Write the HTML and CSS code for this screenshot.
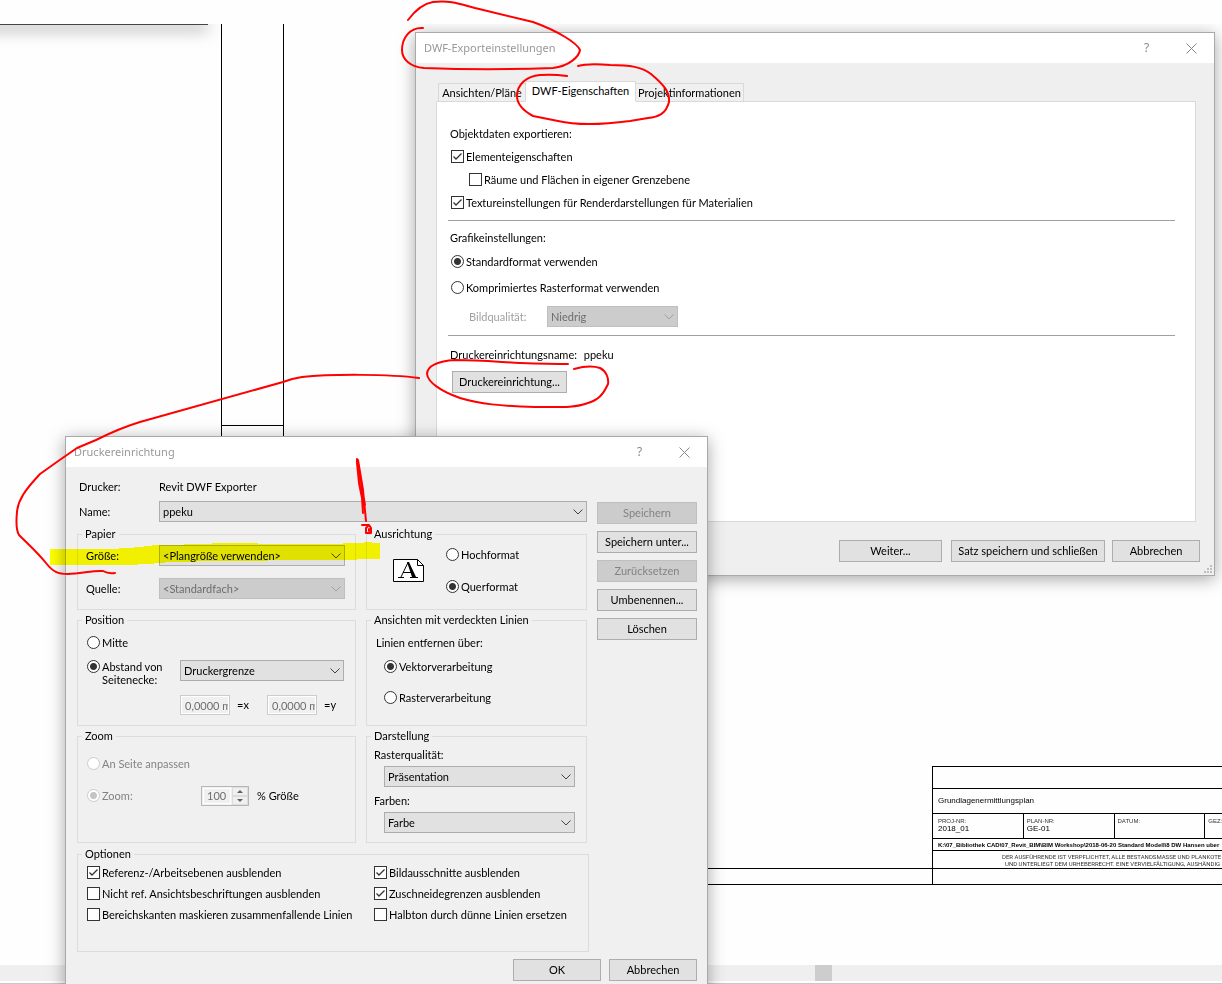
FILE: index.html
```
<!DOCTYPE html>
<html lang="de">
<head>
  <meta charset="UTF-8">
  <meta name="viewport" content="width=device-width, initial-scale=1.0">
  <title>DWF-Exporteinstellungen</title>
  <link rel="stylesheet" href="styles.css">
</head>
<body>
  <main class="workspace">

    <!-- sheet in the background -->
    <div class="ribbon-edge"></div>
    <div class="sheet-column"></div>
    <div class="sheet-border"></div>
    <div class="title-block">
      <table>
        <tr class="row-empty"><td colspan="4"></td></tr>
        <tr class="row-name"><td colspan="4">Grundlagenermittlungsplan</td></tr>
        <tr class="row-info">
          <td>PROJ-NR:<b>2018_01</b></td>
          <td>PLAN-NR:<b>GE-01</b></td>
          <td>DATUM:</td>
          <td>GEZ:</td>
        </tr>
        <tr class="row-path"><td colspan="4">K:\07_Bibliothek CAD\07_Revit_BIM\BIM Workshop\2018-06-20 Standard Modell\8 DW Hansen uber</td></tr>
        <tr class="row-legal"><td colspan="4"><p>DER AUSFÜHRENDE IST VERPFLICHTET, ALLE BESTANDSMASSE UND PLANKOTE</p><p>UND UNTERLIEGT DEM URHEBERRECHT. EINE VERVIELFÄLTIGUNG, AUSHÄNDIG</p></td></tr>
        <tr class="row-last"><td colspan="4"></td></tr>
      </table>
    </div>
    <div class="scrollbar"><div class="thumb"></div></div>

    <!-- DWF export settings -->
    <section class="window export-window">
      <header class="titlebar">
        <h1>DWF-Exporteinstellungen</h1>
        <button class="caption-btn" aria-label="Hilfe">?</button>
        <button class="caption-btn" aria-label="Schließen"><svg width="11" height="11" viewBox="0 0 11 11"><path d="M0.5 0.5l10 10M10.5 0.5l-10 10"/></svg></button>
      </header>
      <div class="export-body">
        <nav class="tabs">
          <button class="tab">Ansichten/Pläne</button>
          <button class="tab active">DWF-Eigenschaften</button>
          <button class="tab">Projektinformationen</button>
        </nav>
        <div class="tab-panel">
          <div class="group objects">
            <p>Objektdaten exportieren:</p>
            <label class="choice"><input type="checkbox" checked>Elementeigenschaften</label>
            <label class="choice indent"><input type="checkbox">Räume und Flächen in eigener Grenzebene</label>
            <label class="choice"><input type="checkbox" checked>Textureinstellungen für Renderdarstellungen für Materialien</label>
          </div>
          <div class="group graphics">
            <p>Grafikeinstellungen:</p>
            <label class="choice"><input type="radio" name="grafik" checked>Standardformat verwenden</label>
            <label class="choice"><input type="radio" name="grafik">Komprimiertes Rasterformat verwenden</label>
            <div class="quality">
              <label for="quality">Bildqualität:</label>
              <select id="quality" disabled><option>Niedrig</option></select>
            </div>
          </div>
          <div class="group setup">
            <p>Druckereinrichtungsname: <span>ppeku</span></p>
            <button class="btn">Druckereinrichtung...</button>
          </div>
        </div>
        <footer class="export-footer">
          <button class="btn next">Weiter...</button>
          <button class="btn save">Satz speichern und schließen</button>
          <button class="btn cancel">Abbrechen</button>
        </footer>
      </div>
      <svg class="grip" width="8" height="8" viewBox="0 0 8 8"><path d="M6 0h2v2h-2zM3 3h2v2h-2zM6 3h2v2h-2zM0 6h2v2h-2zM3 6h2v2h-2zM6 6h2v2h-2z"/></svg>
    </section>

    <!-- print setup -->
    <section class="window print-window">
      <header class="titlebar">
        <h1>Druckereinrichtung</h1>
        <button class="caption-btn" aria-label="Hilfe">?</button>
        <button class="caption-btn" aria-label="Schließen"><svg width="11" height="11" viewBox="0 0 11 11"><path d="M0.5 0.5l10 10M10.5 0.5l-10 10"/></svg></button>
      </header>
      <div class="print-body">
        <div class="print-main">
          <div class="printer">
            <span>Drucker:</span><span>Revit DWF Exporter</span>
            <label for="name">Name:</label>
            <select id="name"><option>ppeku</option></select>
          </div>

          <div class="fieldsets">
            <fieldset class="paper">
              <legend>Papier</legend>
              <label for="size">Größe:</label>
              <select id="size"><option>&lt;Plangröße verwenden&gt;</option></select>
              <label for="source">Quelle:</label>
              <select id="source" disabled><option>&lt;Standardfach&gt;</option></select>
            </fieldset>

            <fieldset class="orientation">
              <legend>Ausrichtung</legend>
              <svg width="32" height="24" viewBox="0 0 32 24">
                <path d="M.5.5h24l6 6v16h-30z" fill="#fff" stroke="#000"/>
                <path d="M24.500 .5v6h6" fill="none" stroke="#000"/>
                <path d="M5 18.500h6M17 18.500h8M8 18l7-14.500M10 13.500h8" fill="none" stroke="#000"/>
                <path d="M14 3h2l7 15h-4z"/>
              </svg>
              <div class="stack">
                <label class="choice"><input type="radio" name="orient">Hochformat</label>
                <label class="choice"><input type="radio" name="orient" checked>Querformat</label>
              </div>
            </fieldset>

            <fieldset class="position">
              <legend>Position</legend>
              <label class="choice"><input type="radio" name="pos">Mitte</label>
              <div class="offset">
                <label class="choice"><input type="radio" name="pos" checked><span>Abstand von<br>Seitenecke:</span></label>
                <select aria-label="Abstand von"><option>Druckergrenze</option></select>
              </div>
              <div class="coords">
                <input type="text" id="x" value="0,0000 mm" disabled><label for="x">=x</label>
                <input type="text" id="y" value="0,0000 mm" disabled><label for="y">=y</label>
              </div>
            </fieldset>

            <fieldset class="hidden-lines">
              <legend>Ansichten mit verdeckten Linien</legend>
              <p>Linien entfernen über:</p>
              <label class="choice"><input type="radio" name="lines" checked>Vektorverarbeitung</label>
              <label class="choice"><input type="radio" name="lines">Rasterverarbeitung</label>
            </fieldset>

            <fieldset class="zoom">
              <legend>Zoom</legend>
              <label class="choice disabled"><input type="radio" name="zoom" disabled>An Seite anpassen</label>
              <div class="zoom-row">
                <label class="choice disabled"><input type="radio" name="zoom" checked disabled>Zoom:</label>
                <span class="spinner">
                  <input type="text" id="percent" value="100" disabled>
                  <button class="spin up" aria-label="Mehr" disabled></button>
                  <button class="spin down" aria-label="Weniger" disabled></button>
                </span>
                <label for="percent">% Größe</label>
              </div>
            </fieldset>

            <fieldset class="display">
              <legend>Darstellung</legend>
              <label for="raster">Rasterqualität:</label>
              <select id="raster"><option>Präsentation</option></select>
              <label for="colors">Farben:</label>
              <select id="colors"><option>Farbe</option></select>
            </fieldset>
          </div>

          <fieldset class="options">
            <legend>Optionen</legend>
            <div class="options-grid">
              <label class="choice"><input type="checkbox" checked>Referenz-/Arbeitsebenen ausblenden</label>
              <label class="choice"><input type="checkbox" checked>Bildausschnitte ausblenden</label>
              <label class="choice"><input type="checkbox">Nicht ref. Ansichtsbeschriftungen ausblenden</label>
              <label class="choice"><input type="checkbox" checked>Zuschneidegrenzen ausblenden</label>
              <label class="choice"><input type="checkbox">Bereichskanten maskieren zusammenfallende Linien</label>
              <label class="choice"><input type="checkbox">Halbton durch dünne Linien ersetzen</label>
            </div>
          </fieldset>
        </div>

        <div class="print-actions">
          <button class="btn" disabled>Speichern</button>
          <button class="btn">Speichern unter...</button>
          <button class="btn" disabled>Zurücksetzen</button>
          <button class="btn">Umbenennen...</button>
          <button class="btn">Löschen</button>
        </div>
      </div>
      <footer class="print-footer">
        <button class="btn">OK</button>
        <button class="btn">Abbrechen</button>
      </footer>
    </section>
  </main>

  <!-- hand-drawn marks -->
  <svg class="marker" width="390" height="580" viewBox="0 0 390 580">
    <path d="M50 549H119V548H134V547H144V546H152V545H184V544H212V543H258V544H343V543H364V542H372V543H380V559H357V560H268V561H197V562H165V563H154V564H138V565H50z"/>
  </svg>
  <svg class="pen" width="720" height="620" viewBox="0 0 720 620">
    <path d="M408 20Q420 4 433 2C450 0 460 4 475 8L533 22C558 31 577 43 580 50C579 57 569 66 553 68C500 70 450 69 424 68C410 67 402 59 402 50C402 38 410 27 423 28"/>
    <path d="M578 66C585 64 600 64 610 65C630 65 642 67 651 74C664 85 670 92 669 102C666 114 658 117 648 118L630 121C600 125 575 125 558 121L533 116C522 110 517 103 517 96C517 85 526 76 540 75Q553 74 567 76"/>
    <path d="M574 369C585 366 594 366 600 368C606 371 609 378 608 384C603 395 598 400 588 403C575 408 560 407 535 407C500 406 480 404 460 398C440 391 428 382 427 374C427 366 438 361 455 360C480 360 500 362 520 363Q550 364 568 364"/>
    <path d="M419 378C390 374 330 374 302 377C295 378 288 380 283 382L140 422Q120 428 96 440L77 448Q58 461 40 474C25 490 18 500 17 512C16 522 16 530 19 535C30 546 38 553 46 563C53 572 58 574 68 574C80 574 94 570 103 571Q108 574 115 573"/>
    <path d="M357 459V463L359 483L362 498L363 513M358 460L363 490L366 521M358 460L361 482L365 505M362 525H369L371 528V533H366V528L368 526M369 529V531"/>
  </svg>
</body>
</html>
```
FILE: styles.css
```
* {
  box-sizing: border-box;
}
body {
  margin: 0;
  padding-top: 24px;
  background: #fefefe;
  color: #000;
  font: 11px/14px Lato, "Noto Sans", sans-serif;
  overflow: hidden;
}
h1, p, fieldset, table {
  margin: 0;
}
button, input, select {
  font: inherit;
  color: inherit;
}

/* workspace */
.workspace {
  position: relative;
  height: calc(100vh - 24px);
  overflow: hidden;
}
.ribbon-edge {
  position: absolute;
  top: -4px;
  left: -20px;
  width: 228px;
  height: 5px;
  background: #444;
  box-shadow: 0 4px 16px rgba(0, 0, 0, 0.5);
}
.sheet-column {
  position: absolute;
  top: 0;
  left: 221px;
  width: 63px;
  height: 440px;
  border: solid #000;
  border-width: 0 1px;
}
.sheet-column::after {
  content: "";
  display: block;
  margin-top: 401px;
  border-top: 1px solid #000;
}
.sheet-border {
  position: absolute;
  top: 844px;
  left: 600px;
  right: 0;
  height: 17px;
  border: solid #000;
  border-width: 1px 0;
}
.title-block {
  position: absolute;
  top: 742px;
  left: 932px;
  right: 0;
  overflow: hidden;
  font-family: "Liberation Sans", Arial, sans-serif;
}
.title-block table {
  width: 364px;
  table-layout: fixed;
  border-collapse: collapse;
}
.title-block td {
  padding: 0 5px;
  border: 1px solid #000;
  white-space: nowrap;
}
.row-empty {
  height: 22px;
}
.row-name {
  height: 25px;
  font-size: 8px;
}
.row-info {
  height: 25px;
  font-size: 6px;
  line-height: 8px;
  color: #333;
}
.title-block .row-info td {
  padding: 3px;
  vertical-align: top;
}
.title-block .row-info td:first-child {
  padding-left: 5px;
}
.row-info b {
  display: block;
  font-size: 8px;
  font-weight: normal;
  color: #000;
}
.row-path {
  height: 12px;
  font-size: 6px;
  line-height: 8px;
  font-weight: bold;
}
.row-legal {
  height: 18px;
  font: 6px/7px Roboto, sans-serif;
  color: #333;
}
.title-block .row-legal td {
  padding-left: 69px;
}
.row-legal p + p {
  padding-left: 3px;
}
.row-last {
  height: 16px;
}
.scrollbar {
  position: absolute;
  left: 0;
  right: 0;
  bottom: 0;
  height: 19px;
  border-bottom: 1px solid #c8c8c8;
  background: linear-gradient(#efefef 16px, #fefefe 16px);
}
.thumb {
  width: 17px;
  height: 16px;
  margin-left: 815px;
  background: #cdcdcd;
}

/* windows */
.window {
  position: absolute;
  border: 1px solid #a9a9a9;
  background: #f0f0f0;
  box-shadow: 0 3px 16px rgba(0, 0, 0, 0.35);
}
.export-window {
  top: 8px;
  left: 415px;
  width: 800px;
  background: #efefef;
}
.print-window {
  top: 412px;
  left: 65px;
  width: 643px;
}
.titlebar {
  display: flex;
  align-items: center;
  height: 30px;
  padding-left: 8px;
  background: #fff;
}
.titlebar h1 {
  flex: 1;
  font: 11px/16px "Noto Sans", sans-serif;
  color: #999;
}
.caption-btn {
  width: 45px;
  height: 28px;
  padding: 0;
  border: 0;
  background: none;
  font: 12px/16px "Noto Sans", sans-serif;
  color: #888;
}
.caption-btn svg {
  display: block;
  margin: auto;
  fill: none;
  stroke: #888;
}

/* controls */
.btn {
  height: 22px;
  padding: 0;
  border: 1px solid #adadad;
  background: #e1e1e1;
}
.btn:disabled {
  border-color: #bfbfbf;
  background: #ccc;
  color: #838383;
}
select {
  appearance: none;
  height: 21px;
  padding: 0 18px 0 3px;
  border: 1px solid #adadad;
  border-radius: 0;
  background: #e1e1e1 url("data:image/svg+xml,%3Csvg xmlns='http://www.w3.org/2000/svg' width='10' height='6'%3E%3Cpath d='M.5.5L5 5L9.500.5' fill='none' stroke='%23444'/%3E%3C/svg%3E") no-repeat right 3px center;
}
select:disabled {
  border-color: #bfbfbf;
  background-color: #ccc;
  background-image: url("data:image/svg+xml,%3Csvg xmlns='http://www.w3.org/2000/svg' width='10' height='6'%3E%3Cpath d='M.5.5L5 5L9.500.5' fill='none' stroke='%23a0a0a0'/%3E%3C/svg%3E");
  color: #6d6d6d;
  opacity: 1;
}
.choice {
  display: flex;
  gap: 2px;
  width: max-content;
}
.choice.disabled {
  color: #838383;
}
input[type="checkbox"],
input[type="radio"] {
  appearance: none;
  flex: none;
  width: 13px;
  height: 13px;
  margin: 0;
  border: 1px solid #333;
  background: #fff;
}
input[type="radio"] {
  border-radius: 50%;
}
input[type="checkbox"]:checked {
  background: #fff url("data:image/svg+xml,%3Csvg xmlns='http://www.w3.org/2000/svg' width='11' height='11'%3E%3Cpath d='M1.500 5.500L4 8L9.500 2.500' fill='none' stroke='%23333' stroke-width='1.300'/%3E%3C/svg%3E");
}
input[type="radio"]:checked {
  background: radial-gradient(circle, #333 3px, #fff 4px);
}
input[type="radio"]:disabled {
  border-color: #ccc;
}
input[type="radio"]:checked:disabled {
  background: radial-gradient(circle, #c4c4c4 3px, #fff 4px);
}
input[type="text"] {
  border: 1px solid #ccc;
  border-radius: 0;
  outline: 1px solid #fff;
  outline-offset: -2px;
  background: #f0f0f0;
  color: #6d6d6d;
}

/* export dialog */
.export-body {
  padding: 18px 14px 13px 20px;
}
.tabs {
  position: relative;
  display: flex;
  align-items: flex-end;
  height: 21px;
  padding-left: 2px;
  margin-bottom: -1px;
}
.tab {
  height: 19px;
  padding: 0;
  border: 1px solid #d9d9d9;
  background: #f0f0f0;
  width: 88px;
}
.tab.active {
  width: 111px;
  height: 21px;
  margin: 0 -1px;
  padding-bottom: 2px;
  border-bottom-color: #fff;
  background: #fff;
  z-index: 1;
}
.tab:last-child {
  width: 109px;
}
.tab-panel {
  height: 421px;
  margin-right: 4px;
  padding: 20px 20px 0 11px;
  border: 1px solid #d9d9d9;
  background: #fff;
}
.group {
  padding: 5px 2px;
  border-bottom: 1px solid #a0a0a0;
}
.group .choice {
  margin-top: 9px;
  margin-left: 1px;
}
.group .choice.indent {
  margin-left: 19px;
}
.group.objects {
  padding-bottom: 10px;
}
.group.graphics {
  padding-top: 10px;
  padding-bottom: 8px;
}
.graphics .choice:nth-of-type(1) {
  margin-top: 10px;
}
.graphics .choice:nth-of-type(2) {
  margin-top: 12px;
}
.quality {
  display: grid;
  grid-template-columns: 78px 131px;
  align-items: center;
  margin: 11px 0 0 19px;
  color: #a0a0a0;
}
.group.setup {
  padding-top: 12px;
  border: 0;
}
.setup span {
  margin-left: 4px;
}
.setup .btn {
  width: 115px;
  margin: 9px 0 0 2px;
}
.export-footer {
  display: flex;
  justify-content: flex-end;
  margin-top: 18px;
}
.export-footer .next {
  width: 103px;
  margin-right: 9px;
}
.export-footer .save {
  width: 154px;
  margin-right: 7px;
}
.export-footer .cancel {
  width: 88px;
}
.grip {
  position: absolute;
  right: 2px;
  bottom: 2px;
  fill: #bfbfbf;
}

/* print dialog */
.print-body {
  display: flex;
  gap: 8px;
  padding: 13px 10px 0 11px;
}
.print-main {
  width: 512px;
}
.printer {
  display: grid;
  grid-template-columns: 80px 428px;
  row-gap: 7px;
  align-items: center;
  padding-left: 2px;
}
.fieldsets {
  display: grid;
  grid-template-columns: 279px 221px;
  gap: 3px 10px;
  margin-top: 5px;
}
fieldset {
  min-width: 0;
  padding: 0 10px 0 9px;
  border: 1px solid #dcdcdc;
}
legend {
  padding: 0 3px;
  margin-left: -5px;
  height: 14px;
}
.paper {
  display: grid;
  grid-template-columns: 73px 186px;
  gap: 12px 0;
  align-content: start;
  align-items: center;
  height: 83px;
  padding-top: 4px;
  padding-left: 8px;
}
.paper legend {
  margin-left: -4px;
}
.orientation {
  display: flex;
  align-items: center;
  gap: 21px;
  padding-bottom: 8px;
}
.orientation svg {
  margin-left: 17px;
}
.stack .choice + .choice {
  margin-top: 18px;
}
.position {
  height: 113px;
  padding-top: 9px;
}
.offset {
  display: flex;
  justify-content: space-between;
  margin-top: 10px;
}
.offset .choice {
  line-height: 13px;
}
.offset select {
  width: 164px;
  margin-right: 1px;
}
.coords {
  display: flex;
  align-items: center;
  margin: 9px 0 0 93px;
}
.coords input {
  flex: none;
  width: 50px;
  height: 20px;
  padding: 0 0 0 4px;
}
.coords label {
  flex: none;
  width: 37px;
  padding-left: 7px;
}
.hidden-lines {
  padding-top: 9px;
}
.hidden-lines .choice {
  margin: 10px 0 0 8px;
}
.hidden-lines .choice:last-child {
  margin-top: 17px;
}
.zoom {
  height: 114px;
  padding-top: 14px;
}
.zoom-row {
  display: flex;
  align-items: center;
  margin-top: 15px;
}
.zoom-row > .choice {
  width: 114px;
}
.spinner {
  display: grid;
  grid-template-columns: 30px 16px;
  grid-template-rows: 9px 9px;
  width: 48px;
  margin-right: 8px;
  border: 1px solid #b4b8bc;
  background: #fff;
}
.spinner input {
  grid-row: span 2;
  width: 30px;
  padding: 0 0 0 5px;
  border: 0;
}
.spin {
  padding: 0;
  border: 1px solid #dcdcdc;
  background: #f0f0f0;
}
.spin::before {
  content: "";
  display: block;
  width: 0;
  margin: auto;
  border: 3px solid transparent;
  border-top: 0;
  border-bottom: 3px solid #606060;
}
.spin.down::before {
  border-top: 3px solid #606060;
  border-bottom: 0;
}
.display {
  padding-top: 5px;
  padding-left: 7px;
}
.display legend {
  margin-left: -3px;
}
.display label,
.display select {
  display: block;
}
.display select {
  width: 191px;
  margin: 4px 0 0 10px;
}
.display select + label {
  margin-top: 7px;
}
.options {
  height: 105px;
  margin-top: 4px;
  padding-top: 5px;
}
.options-grid {
  display: grid;
  grid-template-columns: 287px auto;
  gap: 7px 0;
}
.print-actions {
  display: flex;
  flex-direction: column;
  gap: 7px;
  width: 100px;
  padding-top: 22px;
}
.print-footer {
  display: flex;
  justify-content: flex-end;
  gap: 8px;
  padding: 7px 10px 20px;
}
.print-footer .btn {
  width: 88px;
}

/* marks drawn over the screen */
.marker,
.pen {
  position: absolute;
  top: 0;
  left: 0;
  pointer-events: none;
}
.marker {
  fill: #ff0;
  mix-blend-mode: multiply;
}
.pen {
  fill: none;
  stroke: #f00;
  stroke-width: 2;
  stroke-linecap: round;
  stroke-linejoin: round;
}
```
